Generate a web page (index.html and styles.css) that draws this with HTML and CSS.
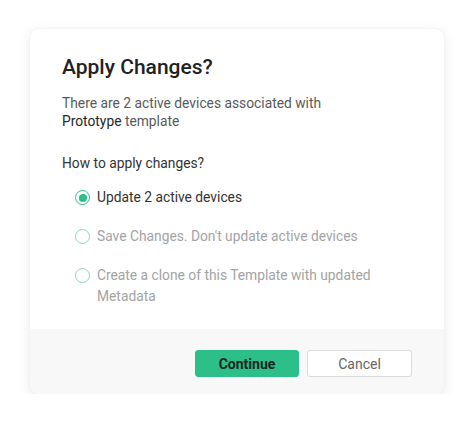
FILE: index.html
```html
<!DOCTYPE html>
<html>
<head>
<meta charset="utf-8">
<link rel="stylesheet" href="styles.css">
</head>
<body>
<div class="dialog">
  <div class="body">
    <h1 class="title">Apply Changes?</h1>
    <p class="desc">There are 2 active devices associated with<br><span class="strong">Prototype</span> template</p>
    <p class="question">How to apply changes?</p>
    <ul class="options">
      <li class="option checked"><span class="radio"></span><span class="label">Update 2 active devices</span></li>
      <li class="option"><span class="radio"></span><span class="label">Save Changes. Don't update active devices</span></li>
      <li class="option"><span class="radio"></span><span class="label">Create a clone of this Template with updated<br>Metadata</span></li>
    </ul>
  </div>
  <div class="footer">
    <button class="btn primary">Continue</button>
    <button class="btn secondary">Cancel</button>
  </div>
</div>
</body>
</html>
```

FILE: styles.css
```css
html, body {
  margin: 0;
  padding: 0;
  background: #ffffff;
}
body {
  font-family: Roboto, "Liberation Sans", sans-serif;
  padding: 29px 30px 0 30px;
}
.dialog {
  width: 414px;
  height: 365px;
  box-sizing: border-box;
  border-radius: 8px;
  background: #ffffff;
  box-shadow: 0 3px 14px rgba(0,0,0,0.09), 0 0 1px rgba(0,0,0,0.14);
  display: flex;
  flex-direction: column;
  overflow: hidden;
}
.body {
  flex: 1;
  padding: 24px 32px 0 32px;
}
.title {
  margin: 0;
  font-size: 21px;
  font-weight: 500;
  color: #222222;
  line-height: 28px;
}
.desc {
  margin: 13px 0 0 0;
  font-size: 13.8px;
  line-height: 18px;
  color: #5a5a5a;
}
.strong {
  color: #262626;
}
.question {
  margin: 24px 0 0 0;
  font-size: 13.8px;
  line-height: 18px;
  color: #333333;
}
.options {
  list-style: none;
  margin: 15px 0 0 13px;
  padding: 0;
  display: flex;
  flex-direction: column;
  gap: 18px;
}
.option {
  display: flex;
  align-items: flex-start;
  gap: 7px;
  font-size: 13.8px;
  line-height: 21px;
  color: #a3a3a3;
}
.option.checked {
  color: #333333;
}
.radio {
  width: 15px;
  height: 15px;
  box-sizing: border-box;
  border-radius: 50%;
  border: 1.5px solid #8fd6bc;
  margin-top: 3px;
  flex: none;
  display: flex;
  align-items: center;
  justify-content: center;
}
.option.checked .radio {
  border-color: #2cbf8a;
}
.option.checked .radio::after {
  content: "";
  width: 8px;
  height: 8px;
  border-radius: 50%;
  background: #2cbf8a;
}
.footer {
  height: 65px;
  box-sizing: border-box;
  background: #f8f8f8;
  display: flex;
  justify-content: flex-end;
  align-items: flex-start;
  gap: 8px;
  padding: 21px 32px 0 0;
}
.btn {
  height: 27px;
  border-radius: 3px;
  font-family: Roboto, "Liberation Sans", sans-serif;
  font-size: 14px;
  cursor: pointer;
  padding: 0;
}
.primary {
  width: 104px;
  background: #2cbf8a;
  border: 1px solid #2cbf8a;
  color: #16261f;
  font-weight: 700;
}
.secondary {
  width: 105px;
  background: #ffffff;
  border: 1px solid #dcdcdc;
  color: #666666;
}
```
